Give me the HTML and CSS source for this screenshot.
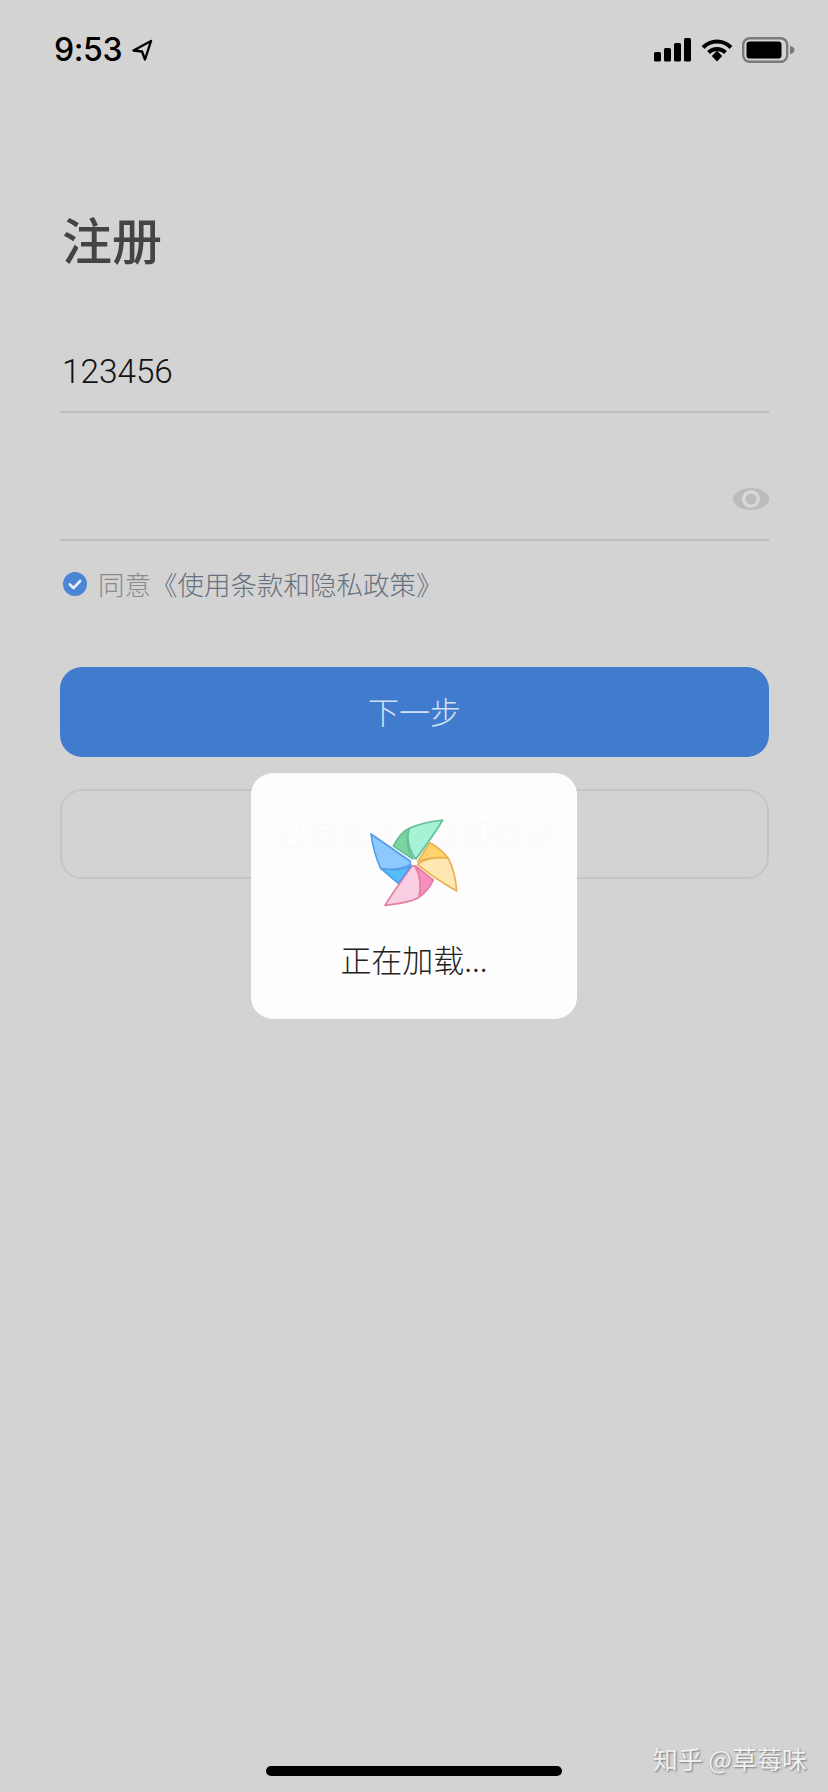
FILE: index.html
```html
<!DOCTYPE html>
<html lang="zh">
<head>
<meta charset="utf-8">
<title>注册</title>
<link rel="stylesheet" href="styles.css">
</head>
<body>
<div class="page">
  <header class="status">
    <div class="status-left">
      <span class="time">9:53</span>
      <svg class="arrow" viewBox="0 0 22 22"><path d="M20 2 2.500 11.500 11 12.500 14 20.500Z"/></svg>
    </div>
    <div class="status-right">
      <svg class="signal" viewBox="0 0 37 24"><rect x="0" y="14" width="7" height="9.5" rx="1.5"/><rect x="10" y="10" width="7" height="13.5" rx="1.5"/><rect x="20" y="5" width="7" height="18.5" rx="1.5"/><rect x="30" y="0" width="7" height="23.5" rx="1.5"/></svg>
      <svg class="wifi" viewBox="0 0 32 24"><path class="arc" d="M2 9.500C10 1.500 22 1.500 30 9.500"/><path class="arc" d="M7.500 14.500C12.500 9.800 19.500 9.800 24.500 14.500"/><path d="M10.800 18 16 12.800 21.200 18 16 23.500Z" class="dot"/></svg>
      <svg class="battery" viewBox="0 0 53 26"><rect class="shell" x="1.200" y="1.200" width="44" height="23.600" rx="6.500"/><rect class="level" x="4.500" y="4.500" width="35" height="17" rx="3"/><path class="nub" d="M48 9c3 .5 4.500 2 4.500 4s-1.500 3.500-4.500 4z"/></svg>
    </div>
  </header>

  <main class="form">
    <h1 class="title">注册</h1>
    <div class="field"><span class="value">123456</span></div>
    <div class="field field-end">
      <svg class="eye" viewBox="0 0 36 22"><ellipse class="eye-shape" cx="18" cy="11" rx="18" ry="11"/><circle class="eye-ring" cx="18" cy="11" r="9"/><circle class="eye-shape" cx="18" cy="11" r="5.500"/></svg>
    </div>
    <div class="agree">
      <svg class="check" viewBox="0 0 24 24"><circle class="check-bg" cx="12" cy="12" r="12"/><path class="check-mark" d="M6.800 12.500 10.500 16 17.200 9"/></svg>
      <span class="agree-text">同意<span class="terms">《使用条款和隐私政策》</span></span>
    </div>
    <button class="btn btn-primary" type="button">下一步</button>
    <button class="btn btn-ghost" type="button">已有账号，立即登录</button>
  </main>

  <footer class="home"><span class="home-bar"></span></footer>

  <div class="toast">
    <svg class="pinwheel" viewBox="-3 0 390 360">
      <g stroke-width="5" stroke-linejoin="round">
        <path fill="#7bd49f" stroke="#66bf94" d="M190 178 130 138C145 110 160 92 178 85C168 115 172 150 190 178Z"/>
        <path fill="#a6f2d6" stroke="#66bf94" d="M197 178C178 150 168 115 178 85C205 72 240 65 278 60C255 100 225 140 197 178Z"/>
        <path fill="#ffd36e" stroke="#eab04e" d="M203 185 240 128C262 140 280 155 295 175C265 170 225 175 203 185Z"/>
        <path fill="#ffe8b0" stroke="#eab04e" d="M203 193C225 175 265 170 295 175C310 205 318 240 320 273C280 250 240 225 203 193Z"/>
        <path fill="#f68fc2" stroke="#e57f9d" d="M197 198 250 240C240 262 225 280 207 292C214 260 210 225 197 198Z"/>
        <path fill="#f9cde2" stroke="#e57f9d" d="M186 197C160 235 130 275 105 316C150 312 185 305 207 292C214 260 210 225 195 198Z"/>
        <path fill="#58bdfb" stroke="#529ee6" d="M92 205 145 250 183 197C160 208 125 212 92 205Z"/>
        <path fill="#8dc8ff" stroke="#529ee6" d="M180 183 63 102C68 140 78 175 92 205C125 212 160 205 183 192Z"/>
      </g>
      <circle cx="192" cy="187" r="9" fill="#fff"/>
    </svg>
    <p class="toast-text">正在加载...</p>
  </div>

  <div class="watermark">知乎 @草莓味</div>
</div>
</body>
</html>
```
FILE: styles.css
```css
* { box-sizing: border-box; }
html, body { margin: 0; padding: 0; }
body {
  background: #d3d3d3;
  font-family: "Liberation Sans", "Noto Sans CJK SC", sans-serif;
}
.page {
  position: relative;
  width: 828px;
  height: 1792px;
  display: flex;
  flex-direction: column;
  overflow: hidden;
}

/* status bar */
.status {
  height: 100px;
  flex: none;
  display: flex;
  align-items: center;
  justify-content: space-between;
  padding: 0 33px 0 54px;
}
.status-left { display: flex; align-items: center; gap: 9px; }
.time {
  font-family: Inter, "Liberation Sans", sans-serif;
  font-size: 32px;
  font-weight: 500;
  color: #000;
  letter-spacing: -0.4px;
  line-height: 40px;
}
.arrow { width: 22px; height: 22px; fill: none; stroke: #000; stroke-width: 2.4; stroke-linejoin: round; }
.status-right { display: flex; align-items: center; }
.signal { width: 37px; height: 24px; fill: #000; margin-right: 10px; }
.wifi { width: 32px; height: 24px; margin-right: 9px; }
.arc { fill: none; stroke: #000; stroke-width: 4; }
.dot { fill: #000; }
.battery { width: 53px; height: 26px; }
.shell { fill: none; stroke: #7a7a7a; stroke-width: 2.4; }
.level { fill: #000; }
.nub { fill: #7a7a7a; }

/* form */
.form {
  display: flex;
  flex-direction: column;
  padding: 0 59px 0 60px;
}
.title {
  margin: 104px 0 13px 2px;
  font-family: "Noto Sans CJK SC", sans-serif;
  font-size: 50px;
  line-height: 68px;
  font-weight: 500;
  color: #444;
}
.field {
  height: 128px;
  padding-top: 46px;
  border-bottom: 2px solid #bebebe;
  display: flex;
  align-items: center;
}
.field-end { justify-content: flex-end; }
.value {
  margin-left: 2px;
  font-family: Roboto, "Liberation Sans", sans-serif;
  font-size: 33.3px;
  font-weight: 300;
  color: #111;
}
.eye { width: 36px; height: 22px; }
.eye-shape { fill: #bcbcbc; }
.eye-ring { fill: #d8d8d8; }

.agree {
  margin-top: 23px;
  height: 40px;
  padding-left: 3px;
  display: flex;
  align-items: center;
  gap: 11px;
}
.check { width: 24px; height: 24px; flex: none; }
.check-bg { fill: #4a86d4; }
.check-mark { fill: none; stroke: #e8eef8; stroke-width: 2.6; stroke-linecap: round; stroke-linejoin: round; }
.agree-text {
  font-family: "Noto Sans CJK SC", sans-serif;
  font-size: 26.5px;
  font-weight: 300;
  line-height: 40px;
  color: #8a8a8a;
}
.terms { color: #66717f; }

.btn {
  display: block;
  width: 100%;
  height: 90px;
  border-radius: 22px;
  font-family: "Noto Sans CJK SC", sans-serif;
  font-size: 31px;
  font-weight: 300;
  padding: 0 0 3px;
}
.btn-primary {
  margin-top: 63px;
  border: 0;
  background: #407bcd;
  color: #d4e0f2;
}
.btn-ghost {
  margin-top: 32px;
  border: 2px solid #c5c5c5;
  background: transparent;
  color: #a0a0a0;
}

/* home indicator */
.home {
  margin-top: auto;
  padding-bottom: 16px;
  display: flex;
  justify-content: center;
}
.home-bar {
  width: 296px;
  height: 10px;
  border-radius: 5px;
  background: #000;
}

/* loading toast */
.toast {
  position: absolute;
  left: 251px;
  top: 773px;
  width: 326px;
  height: 246px;
  padding-top: 27px;
  border-radius: 22px;
  background: rgba(254, 254, 254, 0.96);
  display: flex;
  flex-direction: column;
  align-items: center;
}
.pinwheel { width: 130px; height: 120px; flex: none; }
.toast-text {
  margin: 18px 0 0;
  font-family: "Noto Sans CJK SC", sans-serif;
  font-size: 31px;
  font-weight: 300;
  line-height: 42px;
  color: #222;
}

.watermark {
  position: absolute;
  right: 21px;
  top: 1740px;
  font-family: "Noto Sans CJK SC", sans-serif;
  font-size: 25px;
  line-height: 36px;
  color: #f0f0f0;
  text-shadow: 1px 1px 2px #777;
  white-space: nowrap;
}
```
